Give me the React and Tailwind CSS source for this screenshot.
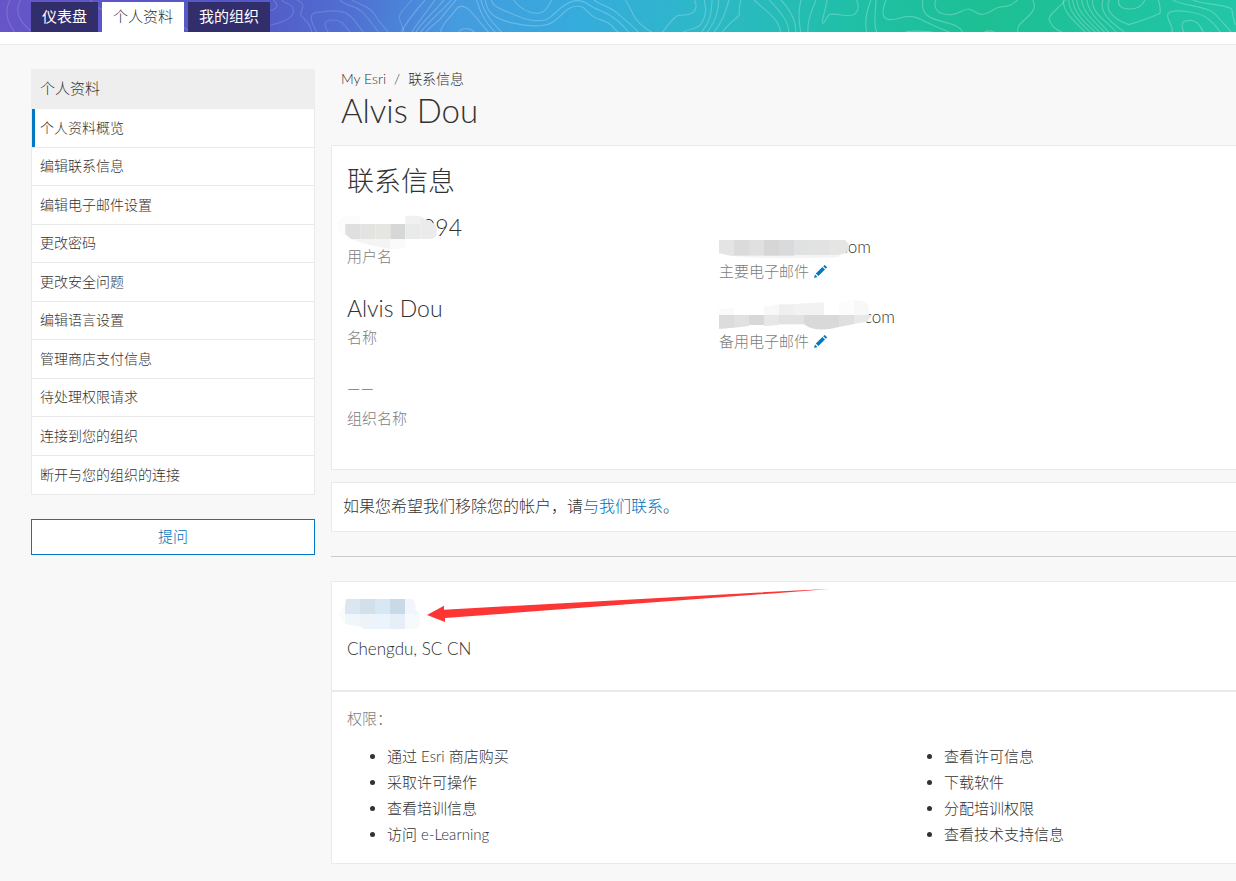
const menuItems = [
  '个人资料概览',
  '编辑联系信息',
  '编辑电子邮件设置',
  '更改密码',
  '更改安全问题',
  '编辑语言设置',
  '管理商店支付信息',
  '待处理权限请求',
  '连接到您的组织',
  '断开与您的组织的连接',
];

const permissionColumns = [
  ['通过 Esri 商店购买', '采取许可操作', '查看培训信息', '访问 e-Learning'],
  ['查看许可信息', '下载软件', '分配培训权限', '查看技术支持信息'],
];

// Contour lines, drawn in three 1260x96 sections placed side by side.
const contoursLeft = [
  'M30 0C14 30 16 60 44 96',
  'M62 0C46 22 50 60 92 92',
  'M270 0C300 30 330 60 420 40S520 80 580 96',
  'M812 75C850 66 885 50 880 28S850 12 845 0',
  'M812 32C835 25 835 12 820 0',
  'M890 0C920 10 905 28 902 40S930 60 935 96',
  'M950 96C935 70 925 45 945 38C980 34 1010 28 1035 38S1075 80 1090 96',
  'M985 96C970 75 970 60 1000 60S1035 80 1050 96',
  'M1020 0C1040 20 1065 15 1085 35S1120 75 1135 96',
  'M1055 0C1080 14 1110 20 1125 45S1155 85 1165 96',
  'M1198 50C1203 30 1220 20 1235 0',
  'M1198 50C1196 60 1210 80 1212 96',
];
const contoursCenter = [
  'M5 96C15 70 40 40 75 0',
  'M36 96C55 65 80 35 105 0',
  'M48 96C70 60 105 35 132 0',
  'M62 96C85 65 130 30 154 0',
  'M122 96C125 75 140 62 155 45S170 18 188 19S220 45 265 96',
  'M176 96C185 82 210 82 223 96',
  'M78 96C95 75 110 70 125 52S150 20 168 0',
  'M230 0C238 20 240 50 285 96',
  'M242 0C250 20 252 45 305 96',
  'M256 0C260 35 280 55 330 67S430 85 460 65S500 18 532 18S560 50 600 59S640 90 655 96',
  'M275 0C275 20 310 30 350 47S430 68 450 52S500 3 530 2S560 15 585 25S650 50 685 96',
  'M340 0C360 25 380 40 410 40S445 15 455 0',
  'M582 0C600 15 630 20 650 38S700 80 715 96',
  'M675 0C700 30 695 65 755 96',
  'M788 96C805 75 820 50 835 46C870 46 890 40 888 14L884 0',
  'M850 96C880 82 900 90 912 55S912 20 914 0',
  'M905 96C930 65 935 40 936 0',
  'M922 96C945 65 955 40 956 0',
  'M942 96C970 60 975 40 987 0',
  'M968 96C985 70 1005 60 1018 45C1017 25 1018 10 1024 0',
  'M1062 0C1100 35 1140 60 1141 96',
  'M1108 0C1135 30 1165 60 1167 96',
  'M1143 0C1170 30 1190 65 1187 96',
  'M1202 96C1195 60 1195 30 1203 0',
  'M1224 96C1220 55 1240 25 1248 0',
];
const contoursRight = [
  'M33 0C28 35 15 65 20 70C28 70 32 45 42 43C70 40 92 52 110 45S130 20 122 0',
  'M165 0C153 30 145 65 152 96',
  'M180 0C180 35 170 65 182 96',
  'M210 0C202 20 190 58 222 59S260 44 290 50S330 72 400 96',
  'M320 0C315 45 340 55 380 65S430 80 440 96',
  'M360 0C350 25 365 48 410 43C430 42 440 25 460 28S480 48 505 42S530 22 560 20S590 10 605 0',
  'M270 95C300 91 330 94 350 96',
  'M505 96C515 91 525 92 535 96',
  'M650 0C665 25 645 42 625 60S605 80 605 96',
  'M748 0C730 25 695 45 700 60S715 88 738 96',
  'M742 0C740 35 775 65 808 96',
  'M758 0C758 35 790 65 822 96',
  'M770 0C772 35 800 65 838 96',
  'M782 0C785 35 815 60 850 96',
  'M797 0C800 35 830 60 865 96',
  'M813 0C815 35 850 65 878 96',
  'M830 0C825 40 875 65 900 96',
  'M861 0C847 40 895 75 925 96',
  'M880 0C863 35 900 60 938 74C970 65 1000 55 1032 40C1035 25 1030 10 1027 0',
  'M908 0C905 20 920 28 945 27S980 15 987 0',
  'M1070 0C1110 22 1175 15 1200 45S1235 80 1245 96',
  'M1130 0C1170 15 1210 10 1247 26C1252 50 1250 60 1260 75',
  'M1068 96C1075 75 1045 55 1057 40S1150 35 1175 55S1200 80 1213 96',
  'M1103 96C1090 65 1105 60 1125 61S1155 80 1162 96',
];

function Banner() {
  return (
    <svg
      className="absolute inset-0 h-full w-full"
      viewBox="0 0 1236 32"
      preserveAspectRatio="none"
      aria-hidden="true"
    >
      <g transform="scale(.33333)" fill="none" stroke="#fff" strokeWidth="3.5">
        <g strokeOpacity=".15">
          {contoursLeft.map((d) => <path key={d} d={d} />)}
        </g>
        <g transform="translate(1200 0)" strokeOpacity=".23">
          {contoursCenter.map((d) => <path key={d} d={d} />)}
        </g>
        <g transform="translate(2448 0)" strokeOpacity=".25">
          {contoursRight.map((d) => <path key={d} d={d} />)}
        </g>
      </g>
    </svg>
  );
}

function Pencil() {
  return (
    <svg width="13" height="13" viewBox="0 0 13 13" fill="#007ac2" aria-hidden="true">
      <path d="M0 13 1 9.4 3.5 12ZM1.8 8.5 8.4 2 11 4.6 4.4 11.1ZM9.2 1.2 10 .4Q10.6-.2 11.3.5L12.6 1.7Q13.2 2.4 12.6 3L11.8 3.8Z" />
    </svg>
  );
}

function Field({ label, children }) {
  return (
    <div className="flex flex-col">
      <div className="flex h-8 items-center text-[23px]">{children}</div>
      <div className="text-[15px] leading-[26px] text-[#7c7c7c]">{label}</div>
    </div>
  );
}

function Email({ label, children }) {
  return (
    <div>
      <div className="relative flex h-6 items-center text-[17px]">{children}</div>
      <div className="flex h-6 items-center gap-[5px] text-[15px] text-[#7c7c7c]">
        {label}
        <button type="button" aria-label={'编辑' + label}><Pencil /></button>
      </div>
    </div>
  );
}

function UsernameMask() {
  return (
    <svg className="absolute -left-2.5 top-[3px]" width="100" height="35" viewBox="35 465 300 105" aria-hidden="true">
      <path fill="#fcfcfc" d="M35 497Q42 465 105 470V495H60V530Q38 520 35 497Z" />
      <path fill="#f1f1f1" d="M240 470H275Q300 472 312 495H240Z" />
      <path fill="#dfdfdf" d="M60 495H105V540H77L60 526Z" />
      <path fill="#e3e3e2" d="M105 495H150V540H105Z" />
      <path fill="#e5e5e2" d="M150 495H195V540H150Z" />
      <path fill="#d7d7d7" d="M195 495H240V540H195Z" />
      <path fill="#e9ebea" d="M240 495H285V540H240Z" />
      <path fill="#ebebeb" d="M285 480Q310 482 328 495Q340 510 330 535L320 540H285Z" />
      <path fill="#f4f4f4" d="M77 540H195V570Q125 560 77 540Z" />
      <path fill="#fafafa" d="M195 540H240V565L220 570H195Z" />
    </svg>
  );
}

function PrimaryMask() {
  return (
    <svg className="absolute left-0 top-1" width="131" height="20" viewBox="60 42 393 60" aria-hidden="true">
      <path fill="#f5f5f5" d="M72 90H420V97Q180 105 72 90Z" />
      <path fill="#e5e4e5" d="M60 45H105V94L60 85Z" />
      <path fill="#dbdbdb" d="M105 45H150V92H105Z" />
      <path fill="#e0e0e0" d="M150 45H195V92H150Z" />
      <path fill="#d6d6d6" d="M195 45H240V92H195Z" />
      <path fill="#d9dadc" d="M240 45H285V92H240Z" />
      <path fill="#dfe2e1" d="M285 45H330V90H285Z" />
      <path fill="#e2e2e2" d="M330 45H390V90H330Z" />
      <path fill="#e5e5e3" d="M390 45H438Q462 66 440 85L420 90H390Z" />
    </svg>
  );
}

function SecondaryMask() {
  return (
    <svg className="absolute left-0 -top-[5px]" width="153" height="30" viewBox="60 225 459 90" aria-hidden="true">
      <path fill="#fafafa" d="M60 252 105 250V270H60Z" />
      <path fill="#f8f8f8" d="M195 245 240 238V270H195Z" />
      <path fill="#efefee" d="M240 238H285V270H240Z" />
      <path fill="#f2f2f2" d="M285 237 375 232V270H285Z" />
      <path fill="#fcfcfc" d="M420 232 465 226V270H420Z" />
      <path fill="#f8f8f8" d="M465 226Q500 225 510 245V270H465Z" />
      <path fill="#dcdcdc" d="M60 270H105V308L60 312Z" />
      <path fill="#e1e1e1" d="M105 270H150V303L105 308Z" />
      <path fill="#d8d8d8" d="M150 270H195V300H150Z" />
      <path fill="#e6e8e6" d="M195 270H240V300L195 304Z" />
      <path fill="#e2e2e2" d="M240 270H315V298H240Z" />
      <path fill="#d9d9d9" d="M315 270H420V306Q350 325 315 298Z" />
      <path fill="#dfdfdf" d="M420 270H465V297L420 306Z" />
      <path fill="#e7e9e8" d="M465 270H519L505 290 465 297Z" />
    </svg>
  );
}

function OrganizationMask() {
  return (
    <svg width="81" height="32" viewBox="42 87 243 96" className="-ml-2" aria-hidden="true">
      <path fill="#fbfbfb" d="M60 110Q40 125 44 145L60 168Z" />
      <path fill="#dbe6f1" d="M63 90H105V135H60V112Z" />
      <path fill="#d2e0ec" d="M105 90H150V135H105Z" />
      <path fill="#d8e7f3" d="M150 90H195V135H150Z" />
      <path fill="#c8dae8" d="M195 90H240V135H195Z" />
      <path fill="#f2f5fb" d="M240 90H264Q275 110 270 120L285 135H240Z" />
      <path fill="#f1f6fa" d="M60 135H105V173L60 165Z" />
      <path fill="#edf3f8" d="M105 135H150V180H118L105 173Z" />
      <path fill="#ebf3fc" d="M150 135H195V180H150Z" />
      <path fill="#e6eef7" d="M195 135H240V180H195Z" />
      <path fill="#f6fafd" d="M240 135H285V168Q282 180 265 180H240Z" />
    </svg>
  );
}

const card = 'border-y border-l border-[#eaeaea] bg-white';

export default function App() {
  return (
    <div className="min-h-screen overflow-x-hidden bg-[#f8f8f8] font-['Lato','Noto_Sans_CJK_SC',sans-serif] font-light text-[#323232]">
      <header className="border-b border-[#eaeaea] bg-white pb-3">
        <div className="relative bg-[linear-gradient(100deg,#6655c8_0%,#5458c6_20%,#4f72d3_29%,#459bdf_37%,#35acdc_47%,#2db8c7_57%,#20bfa9_68%,#1dbf93_80%,#22c6a8_100%)]">
          <Banner />
          <nav className="relative flex gap-1 pl-[31px] pt-0.5 text-[15px] leading-7">
            <a href="#dashboard" className="bg-[#322d6b] px-[11px] pb-0.5 font-normal text-white">仪表盘</a>
            <a href="#profile" className="bg-white px-[11px] pb-0.5" aria-current="page">个人资料</a>
            <a href="#organization" className="bg-[#322d6b] px-[11px] pb-0.5 font-normal text-white">我的组织</a>
          </nav>
        </div>
      </header>

      <div className="flex gap-4 pb-4 pl-[31px] pt-6">
        <aside className="flex w-[284px] shrink-0 flex-col gap-6">
          <div>
            <h2 className="bg-[#eee] px-[9px] pb-0.5 text-[15px] leading-[38px]">个人资料</h2>
            <ul className="grid min-h-[386px] auto-rows-fr divide-y divide-[#eaeaea] border-x border-b border-[#eaeaea] bg-white">
              {menuItems.map((item, i) => (
                <li key={item} className="flex">
                  <a
                    href={'#item-' + i}
                    className={
                      i === 0
                        ? 'flex flex-1 items-center border-l-3 border-[#007ac2] pl-[5px] text-sm'
                        : 'flex flex-1 items-center pl-2 text-sm'
                    }
                  >
                    {item}
                  </a>
                </li>
              ))}
            </ul>
          </div>
          <button type="button" className="h-9 border border-[#007ac2] bg-white pb-0.5 text-[15px] text-[#006fb8]">
            提问
          </button>
        </aside>

        <main className="min-w-0 flex-1">
          <div className="pl-2.5">
            <nav className="flex gap-2 text-sm leading-5">
              <a href="#home">My Esri</a>
              <span>/</span>
              <span>联系信息</span>
            </nav>
            <h1 className="pb-3.5 text-[33px] leading-[42px]">Alvis Dou</h1>
          </div>

          <section className={card + ' px-[15px] pb-[38px] pt-[13px]'}>
            <h2 className="text-[27px] leading-[44px]">联系信息</h2>
            <div className="grid grid-cols-[372fr_502fr] pt-2">
              <div className="flex flex-col gap-[23px]">
                <Field label="用户名">
                  <div className="relative pl-[75px] leading-8">
                    994
                    <UsernameMask />
                  </div>
                </Field>
                <Field label="名称">Alvis Dou</Field>
                <Field label="组织名称"><span className="text-[17px]">——</span></Field>
              </div>
              <div className="flex flex-col gap-[22px] pt-6">
                <Email label="主要电子邮件">
                  <span className="pl-[121px]">com</span>
                  <PrimaryMask />
                </Email>
                <Email label="备用电子邮件">
                  <span className="pl-[145px]">com</span>
                  <SecondaryMask />
                </Email>
              </div>
            </div>
          </section>

          <p className={card + ' mt-3 px-[11px] pb-0.5 text-base leading-[46px]'}>
            如果您希望我们移除您的帐户，请<a href="#contact" className="text-[#006fb8]">与我们联系</a>。
          </p>

          <hr className="my-6 border-[#cacaca]" />

          <section>
            <div className={card + ' relative flex flex-col items-start gap-2 px-[15px] pb-[30px] pt-4'}>
              <OrganizationMask />
              <p className="text-[17px] leading-[22px]">Chengdu, SC CN</p>
              <svg
                className="absolute left-[95px] top-1.5"
                width="402"
                height="34"
                viewBox="306 54 1206 102"
                aria-hidden="true"
              >
                <path fill="#fc3535" d="M306 135 357 107V119L1400 62 1512 57 1400 66 360 144V156Z" />
              </svg>
            </div>
            <div className={card + ' px-[15px] pb-4 pt-[13px]'}>
              <h3 className="text-[15px] leading-[26px] text-[#7c7c7c]">权限：</h3>
              <div className="grid grid-cols-[557fr_317fr] pt-3">
                {permissionColumns.map((items) => (
                  <ul key={items[0]} className="list-disc pl-10 text-[15px] leading-[26px]">
                    {items.map((item) => <li key={item}>{item}</li>)}
                  </ul>
                ))}
              </div>
            </div>
          </section>
        </main>
      </div>
    </div>
  );
}
